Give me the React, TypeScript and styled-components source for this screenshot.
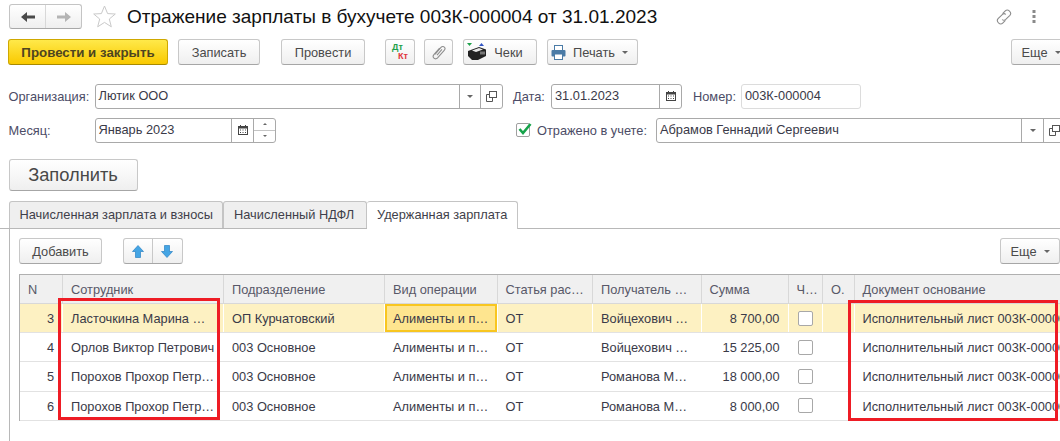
import React from 'react';
import styled, { createGlobalStyle } from 'styled-components';

const GlobalStyle = createGlobalStyle`
    html, body {
        margin: 0;
        padding: 0;
        background: #ffffff;
        overflow: hidden;
    }
    body {
        font-family: "Liberation Sans", Arial, sans-serif;
        font-size: 12.8px;
        color: #3c3c46;
    }
`

const COLUMNS = '43px 161px 161px 112.5px 95.5px 108.5px 87px 34.5px 31.5px 220px';

const Page = styled.div`
    width: 1060px;
    height: 441px;
    overflow: hidden;
    display: flex;
    flex-direction: column;
`

const TitleBar = styled.div`
    display: flex;
    align-items: center;
    height: 25px;
    margin-top: 4px;
    padding-left: 9px;
`

const NavGroup = styled.div`
    display: flex;
    width: 73px;
    height: 25px;
    box-sizing: border-box;
    border: 1px solid #c4c4c4;
    border-bottom-color: #a8a8a8;
    border-radius: 3px;
    background: linear-gradient(#ffffff, #efefef);
`

const NavButton = styled.div<{ $divider?: boolean }>`
    flex: 1;
    display: flex;
    align-items: center;
    justify-content: center;
    border-left: ${p => (p.$divider ? '1px solid #d8d8d8' : 'none')};
`

const StarWrap = styled.div`
    display: flex;
    margin-left: 11px;
`

const Title = styled.h1`
    margin: 0 0 0 11px;
    font-size: 19.05px;
    font-weight: normal;
    color: #111111;
    white-space: nowrap;
    flex: 1;
`

const TitleIcons = styled.div`
    display: flex;
    align-items: center;
    gap: 20px;
    padding-right: 24px;
`

const Toolbar = styled.div`
    display: flex;
    flex: none;
    align-items: center;
    width: 1071px;
    box-sizing: border-box;
    height: 26px;
    margin-top: 10px;
    padding-left: 8px;
`

const Button = styled.div<{ $width: number; $left?: number; $pad?: number; $primary?: boolean }>`
    display: flex;
    align-items: center;
    justify-content: center;
    gap: 7px;
    flex: none;
    box-sizing: border-box;
    height: 26px;
    width: ${p => p.$width}px;
    margin-left: ${p => p.$left ?? 0}px;
    padding-right: ${p => p.$pad ?? 0}px;
    border: 1px solid ${p => (p.$primary ? '#cfa800' : '#c8c8c8')};
    border-bottom-color: ${p => (p.$primary ? '#a88a00' : '#a6a6a6')};
    border-radius: 3px;
    background: ${p => (p.$primary ? 'linear-gradient(#ffe94a, #f9c900)' : 'linear-gradient(#ffffff, #efefef)')};
    color: ${p => (p.$primary ? '#4e4520' : '#4a4a4a')};
    font-weight: ${p => (p.$primary ? 'bold' : 'normal')};
    font-size: ${p => (p.$primary ? '13.3px' : '12.8px')};
    white-space: nowrap;
`

const Spacer = styled.div`
    flex: 1;
`

const DtKt = styled.div`
    display: flex;
    flex-direction: column;
    font-size: 9px;
    line-height: 9px;
    font-weight: bold;
`

const Dt = styled.span`
    color: #1ea14a;
`

const Kt = styled.span`
    color: #e0343c;
    margin-left: 6px;
`

const Caret = styled.span`
    width: 0;
    height: 0;
    border-left: 3px solid transparent;
    border-right: 3px solid transparent;
    border-top: 3px solid #666666;
`

const FormRow = styled.div<{ $top: number }>`
    display: flex;
    flex: none;
    align-items: center;
    height: 24.5px;
    margin-top: ${p => p.$top}px;
    padding-left: 8.5px;
`

const Label = styled.label<{ $width?: number; $left?: number }>`
    flex: none;
    width: ${p => (p.$width ? `${p.$width}px` : 'auto')};
    margin-left: ${p => p.$left ?? 0}px;
    color: #4c4c66;
    white-space: nowrap;
`

const Field = styled.div<{ $width: number; $pale?: boolean }>`
    display: flex;
    flex: none;
    box-sizing: border-box;
    width: ${p => p.$width}px;
    height: 100%;
    border: 1px solid ${p => (p.$pale ? '#dcdcdc' : '#a9a9a9')};
    border-radius: 3px;
    background: #ffffff;
`

const FieldValue = styled.div`
    flex: 1;
    padding-left: 3px;
    line-height: 22px;
    color: #3a3a48;
    white-space: nowrap;
    overflow: hidden;
`

const FieldButton = styled.div<{ $width: number }>`
    display: flex;
    flex-direction: column;
    align-items: center;
    justify-content: center;
    flex: none;
    width: ${p => p.$width}px;
    border-left: 1px solid #a9a9a9;
`

const SpinHalf = styled.div`
    flex: 1;
    width: 100%;
    display: flex;
    align-items: center;
    justify-content: center;
    & + & {
        border-top: 1px solid #c4c4c4;
    }
`

const SpinUp = styled.span`
    border-left: 2px solid transparent;
    border-right: 2px solid transparent;
    border-bottom: 2px solid #666666;
`

const SpinDown = styled.span`
    border-left: 2px solid transparent;
    border-right: 2px solid transparent;
    border-top: 2px solid #666666;
`

const CheckBox = styled.div`
    position: relative;
    flex: none;
    box-sizing: border-box;
    width: 14px;
    height: 14px;
    margin-left: 240px;
    border: 1px solid #a0a0a0;
    border-radius: 2px;
    background: #ffffff;
`

const CheckMark = styled.svg`
    position: absolute;
    left: 0;
    top: -3px;
`

const FillButton = styled(Button)`
    height: 32px;
    margin-top: 16.5px;
    margin-left: 8.5px;
    font-size: 18.3px;
    color: #484848;
`

const TabBar = styled.div`
    display: flex;
    flex: none;
    height: 28px;
    margin-top: 10px;
    padding-left: 8.5px;
    box-sizing: border-box;
    border-bottom: 1px solid #b8b8b8;
`

const Tab = styled.div<{ $width: number; $active?: boolean }>`
    flex: none;
    box-sizing: border-box;
    width: ${p => p.$width}px;
    height: ${p => (p.$active ? '28px' : '27px')};
    padding-left: 10px;
    line-height: 26px;
    border: 1px solid #c4c4c4;
    border-bottom: none;
    border-left: ${p => (p.$active ? 'none' : '1px solid #c4c4c4')};
    border-radius: 3px 3px 0 0;
    background: ${p => (p.$active ? '#ffffff' : '#efefef')};
    color: #3f3f4a;
    white-space: nowrap;
`

const Panel = styled.div`
    flex: 1;
    margin-left: 8.5px;
    padding-left: 9.5px;
    border-left: 1px solid #b8b8b8;
    display: flex;
    flex-direction: column;
    min-height: 0;
`

const PanelToolbar = styled.div`
    display: flex;
    align-items: center;
    height: 26px;
    margin-top: 9px;
`

const ArrowGroup = styled.div`
    display: flex;
    flex: none;
    box-sizing: border-box;
    width: 59.5px;
    height: 26px;
    margin-left: 21px;
    border: 1px solid #c8c8c8;
    border-bottom-color: #a6a6a6;
    border-radius: 3px;
    background: linear-gradient(#ffffff, #efefef);
`

const ArrowButton = styled.div<{ $divider?: boolean }>`
    flex: 1;
    display: flex;
    align-items: center;
    justify-content: center;
    border-left: ${p => (p.$divider ? '1px solid #c8c8c8' : 'none')};
`

const Table = styled.div`
    position: relative;
    margin-top: 9.5px;
    width: 1100px;
    border-top: 1px solid #b0b0b0;
    border-left: 1px solid #b0b0b0;
`

const Row = styled.div`
    display: grid;
    grid-template-columns: ${COLUMNS};
    height: 29.2px;
    box-sizing: border-box;
    border-bottom: 1px solid #e2e2e2;
`

const HeaderRow = styled(Row)`
    height: 29.5px;
    border-bottom: 1px solid #d8d8d8;
    background: #f0f0f0;
`

const HeaderCell = styled.div`
    padding-left: 8px;
    line-height: 29px;
    color: #585868;
    border-right: 1px solid #d8d8d8;
    white-space: nowrap;
    overflow: hidden;
`

const Cell = styled.div<{ $selected?: boolean; $align?: string; $focus?: boolean }>`
    box-sizing: border-box;
    padding: 2px ${p => (p.$align === 'right' ? '8px' : '4px')} 0 8px;
    line-height: 26px;
    text-align: ${p => p.$align ?? 'left'};
    color: #3a3a48;
    white-space: nowrap;
    overflow: hidden;
    background: ${p => (p.$focus ? '#fee58f' : p.$selected ? '#fdf1c2' : 'transparent')};
    border-right: 1px solid ${p => (p.$selected ? '#ffffff' : 'transparent')};
    box-shadow: ${p => (p.$focus ? 'inset 0 0 0 2px #f8c620' : 'none')};
`

const CheckCell = styled(Cell)`
    display: flex;
    align-items: center;
    justify-content: center;
    padding: 0;
`

const RowCheck = styled.div`
    box-sizing: border-box;
    width: 15px;
    height: 15px;
    border: 1px solid #a8a8a8;
    border-radius: 2px;
    background: #ffffff;
`

const RedFrame = styled.div<{ $left: number; $top: number; $width: number; $height: number }>`
    position: absolute;
    left: ${p => p.$left}px;
    top: ${p => p.$top}px;
    width: ${p => p.$width}px;
    height: ${p => p.$height}px;
    box-sizing: border-box;
    border: 3px solid #ee1c25;
    pointer-events: none;
`

const OpenIcon = () => (
    <svg width="11" height="11" viewBox="0 0 11 11" fill="none" stroke="#555555">
        <rect x="3.5" y="0.5" width="7" height="6" fill="#ffffff" />
        <path d="M3 3.5H0.5V10.5H6.5V7" />
    </svg>
)

const CalendarIcon = () => (
    <svg width="10" height="10" viewBox="0 0 10 10">
        <rect x="0.5" y="1.5" width="9" height="8" fill="#ffffff" stroke="#444444" />
        <rect x="0.5" y="1.5" width="9" height="2" fill="#444444" />
        <path d="M2.5 0v2M7.5 0v2" stroke="#444444" />
        <path d="M2 5h1M4.5 5h1M7 5h1M2 7.5h1M4.5 7.5h1M7 7.5h1" stroke="#444444" />
    </svg>
)

const NavArrow = ({ color, flip }: { color: string; flip?: boolean }) => (
    <svg width="14" height="10" viewBox="0 0 14 10" style={flip ? { transform: 'scaleX(-1)' } : undefined}>
        <path d="M0 5L6 0V3.5H14V6.5H6V10Z" fill={color} />
    </svg>
)

const BlueArrow = ({ down }: { down?: boolean }) => (
    <svg width="12" height="13" viewBox="0 0 12 13" style={down ? { transform: 'scaleY(-1)' } : undefined}>
        <path d="M6 0.5L11.5 6.5H8.5V12.5H3.5V6.5H0.5Z" fill="#45a5e4" stroke="#2b83c4" strokeWidth="0.7" />
    </svg>
)

const StarIcon = () => (
    <svg width="23" height="23" viewBox="0 0 23 23" fill="#ffffff" stroke="#c9c9c9">
        <path d="M11.5 1L14.6 8.6L22.3 9L16.3 14L18.3 21.8L11.5 17.4L4.7 21.8L6.7 14L0.7 9L8.4 8.6Z" />
    </svg>
)

const LinkIcon = () => (
    <svg width="16" height="16" viewBox="0 0 16 16" fill="none" stroke="#8c8c8c" strokeWidth="1.1">
        <path d="M6.6 4.6L9.3 1.9C10.3 0.9 12.2 0.9 13.5 2.1C14.8 3.4 14.9 5.2 13.9 6.3L9.5 10.7C8.5 11.6 7.1 11.5 6.2 10.5" />
        <path d="M9.4 11.4L6.7 14.1C5.7 15.1 3.8 15.1 2.5 13.9C1.2 12.6 1.1 10.8 2.1 9.7L6.5 5.3C7.5 4.4 8.9 4.5 9.8 5.5" />
    </svg>
)

const DotsIcon = () => (
    <svg width="4" height="13" viewBox="0 0 4 13" fill="#8a8a8a">
        <rect x="0.5" y="0" width="3" height="3" />
        <rect x="0.5" y="5" width="3" height="3" />
        <rect x="0.5" y="10" width="3" height="3" />
    </svg>
)

const ClipIcon = () => (
    <svg width="14" height="15" viewBox="0 0 14 15" fill="none" stroke="#8e8e8e" strokeWidth="1.1">
        <path d="M3.2 9.2L9 2.4C10 1.3 11.6 1.2 12.4 2.1C13.3 3 13.1 4.4 12.2 5.4L5.8 12.7C4.6 14 2.9 14.2 1.9 13.2C0.9 12.3 1 10.7 2.1 9.4L7.6 3.2" />
        <path d="M5 10.2L10 4.4" />
    </svg>
)

const ReceiptIcon = () => (
    <svg width="20" height="18" viewBox="0 0 20 18">
        <path d="M0 0H5L2.5 3Z" fill="#1ea14a" />
        <path d="M12 3L14.5 0L17 3Z" fill="#3155c4" />
        <path d="M1 8L12 4L19 6.5V13L11 17H5L1 13Z" fill="#222222" />
        <path d="M5 7.5L12 5L16 6.5L9 9Z" fill="#e8e8e8" />
        <rect x="13" y="8.5" width="5" height="3" fill="#777777" />
    </svg>
)

const PrinterIcon = () => (
    <svg width="15" height="15" viewBox="0 0 15 15">
        <rect x="3.5" y="0.5" width="8" height="5" fill="#ffffff" stroke="#4a7ba6" />
        <rect x="0.5" y="5" width="14" height="6.5" rx="1" fill="#4a7ba6" />
        <rect x="3.5" y="9" width="8" height="5.5" fill="#ffffff" stroke="#4a7ba6" />
    </svg>
)

const HEADERS = ['N', 'Сотрудник', 'Подразделение', 'Вид операции', 'Статья рас…', 'Получатель …', 'Сумма', 'Ч…', 'О.', 'Документ основание'];

const ROWS = [
    { n: 3, name: 'Ласточкина Марина …', dept: 'ОП Курчатовский', payee: 'Войцехович …', sum: '8 700,00' },
    { n: 4, name: 'Орлов Виктор Петрович', dept: '003 Основное', payee: 'Войцехович …', sum: '15 225,00' },
    { n: 5, name: 'Порохов Прохор Петр…', dept: '003 Основное', payee: 'Романова М…', sum: '18 000,00' },
    { n: 6, name: 'Порохов Прохор Петр…', dept: '003 Основное', payee: 'Романова М…', sum: '8 000,00' },
];

const App = () => {
    return (
        <Page>
            <GlobalStyle />
            <TitleBar>
                <NavGroup>
                    <NavButton><NavArrow color="#4a4a4a" /></NavButton>
                    <NavButton $divider><NavArrow color="#b4b4b4" flip /></NavButton>
                </NavGroup>
                <StarWrap><StarIcon /></StarWrap>
                <Title>Отражение зарплаты в бухучете 003К-000004 от 31.01.2023</Title>
                <TitleIcons>
                    <LinkIcon />
                    <DotsIcon />
                </TitleIcons>
            </TitleBar>
            <Toolbar>
                <Button $primary $width={160}>Провести и закрыть</Button>
                <Button $width={82} $left={10}>Записать</Button>
                <Button $width={84} $left={21}>Провести</Button>
                <Button $width={30} $left={20}>
                    <DtKt><Dt>Дт</Dt><Kt>Кт</Kt></DtKt>
                </Button>
                <Button $width={29} $left={9}><ClipIcon /></Button>
                <Button $width={74} $left={10} $pad={10}><ReceiptIcon />Чеки</Button>
                <Button $width={91} $left={10} $pad={6}><PrinterIcon />Печать<Caret /></Button>
                <Spacer />
                <Button $width={60}>Еще<Caret /></Button>
            </Toolbar>
            <FormRow $top={19}>
                <Label $width={86}>Организация:</Label>
                <Field $width={408.5}>
                    <FieldValue>Лютик ООО</FieldValue>
                    <FieldButton $width={20.5}><Caret /></FieldButton>
                    <FieldButton $width={21}><OpenIcon /></FieldButton>
                </Field>
                <Label $width={38} $left={10}>Дата:</Label>
                <Field $width={131}>
                    <FieldValue>31.01.2023</FieldValue>
                    <FieldButton $width={21}><CalendarIcon /></FieldButton>
                </Field>
                <Label $width={48} $left={11}>Номер:</Label>
                <Field $width={120} $pale>
                    <FieldValue>003К-000004</FieldValue>
                </Field>
            </FormRow>
            <FormRow $top={9.5}>
                <Label $width={86}>Месяц:</Label>
                <Field $width={181.5}>
                    <FieldValue>Январь 2023</FieldValue>
                    <FieldButton $width={21}><CalendarIcon /></FieldButton>
                    <FieldButton $width={21}>
                        <SpinHalf><SpinUp /></SpinHalf>
                        <SpinHalf><SpinDown /></SpinHalf>
                    </FieldButton>
                </Field>
                <CheckBox>
                    <CheckMark width="16" height="16" viewBox="0 0 16 16">
                        <path d="M2.5 8L6 12L13.5 3" fill="none" stroke="#16a34a" strokeWidth="2.6" />
                    </CheckMark>
                </CheckBox>
                <Label $width={119} $left={7}>Отражено в учете:</Label>
                <Field $width={410}>
                    <FieldValue>Абрамов Геннадий Сергеевич</FieldValue>
                    <FieldButton $width={21}><Caret /></FieldButton>
                    <FieldButton $width={21}><OpenIcon /></FieldButton>
                </Field>
            </FormRow>
            <FillButton $width={129}>Заполнить</FillButton>
            <TabBar>
                <Tab $width={214.5}>Начисленная зарплата и взносы</Tab>
                <Tab $width={144}>Начисленный НДФЛ</Tab>
                <Tab $width={151} $active>Удержанная зарплата</Tab>
            </TabBar>
            <Panel>
                <PanelToolbar>
                    <Button $width={83}>Добавить</Button>
                    <ArrowGroup>
                        <ArrowButton><BlueArrow /></ArrowButton>
                        <ArrowButton $divider><BlueArrow down /></ArrowButton>
                    </ArrowGroup>
                    <Spacer />
                    <Button $width={60}>Еще<Caret /></Button>
                </PanelToolbar>
                <Table>
                    <HeaderRow>
                        {HEADERS.map(h => <HeaderCell key={h}>{h}</HeaderCell>)}
                    </HeaderRow>
                    {ROWS.map((r, i) => {
                        const selected = i === 0;
                        return (
                            <Row key={r.n}>
                                <Cell $selected={selected} $align="right">{r.n}</Cell>
                                <Cell $selected={selected}>{r.name}</Cell>
                                <Cell $selected={selected}>{r.dept}</Cell>
                                <Cell $selected={selected} $focus={selected}>Алименты и п…</Cell>
                                <Cell $selected={selected}>ОТ</Cell>
                                <Cell $selected={selected}>{r.payee}</Cell>
                                <Cell $selected={selected} $align="right">{r.sum}</Cell>
                                <CheckCell $selected={selected}><RowCheck /></CheckCell>
                                <Cell $selected={selected} />
                                <Cell $selected={selected}>Исполнительный лист 003К-000004</Cell>
                            </Row>
                        );
                    })}
                    <RedFrame $left={38} $top={23} $width={162} $height={122} />
                    <RedFrame $left={828} $top={25} $width={210} $height={121} />
                </Table>
            </Panel>
        </Page>
    );
}

export default App;
